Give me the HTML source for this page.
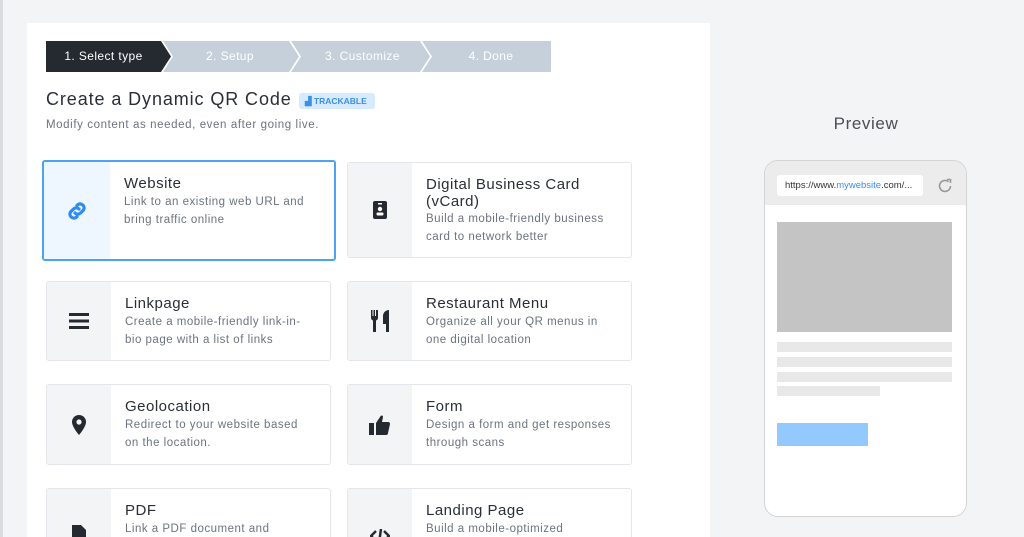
<!DOCTYPE html>
<html style="height:537px;overflow:hidden"><head><style>
*{margin:0;padding:0;box-sizing:border-box}
body{width:1024px;height:537px;overflow:hidden;background:#f3f4f6;font-family:"Liberation Sans",sans-serif;position:relative}
.abs{position:absolute}
.panel{left:27px;top:23px;width:683px;height:514px;background:#fff}
.step{top:41px;height:31px;color:#fff;font-size:12px;letter-spacing:0.4px;line-height:31px;text-align:center}
.card{position:absolute;width:285px;border:1px solid #e3e6ea;border-radius:3px;background:#fff;overflow:hidden}
.card .ic{position:absolute;left:0;top:0;bottom:0;width:64px;background:#f3f4f6;display:flex;align-items:center;justify-content:center}
.card .t{position:absolute;left:78px;top:13px;font-size:15px;letter-spacing:0.5px;color:#2a2f36;line-height:17px}
.card .d{position:absolute;left:78px;top:32px;font-size:11.5px;letter-spacing:0.5px;color:#6b7480;line-height:17.5px;width:190px}
</style></head><body>
<div class="abs" style="left:0;top:0;width:3px;height:537px;background:#d9dbde"></div>
<div class="abs panel"></div>
<svg class="abs" style="left:46px;top:41px" width="505" height="31">
<polygon points="0,0 115,0 125,15.5 115,31 0,31" fill="#252a31"/>
<polygon points="117,0 243,0 253,15.5 243,31 117,31 127,15.5" fill="#c5d0da"/>
<polygon points="245,0 374,0 384,15.5 374,31 245,31 255,15.5" fill="#c5d0da"/>
<polygon points="376,0 505,0 505,31 376,31 386,15.5" fill="#c5d0da"/>
</svg>
<div class="abs step" style="left:46px;width:115px">1. Select type</div>
<div class="abs step" style="left:170px;width:120px">2. Setup</div>
<div class="abs step" style="left:300px;width:125px">3. Customize</div>
<div class="abs step" style="left:432px;width:118px">4. Done</div>
<div class="abs" style="left:46px;top:89px;font-size:18px;letter-spacing:0.9px;color:#2a2f36">Create a Dynamic QR Code</div>
<div class="abs" style="left:299px;top:93px;width:76px;height:16px;background:#d6ebff;border-radius:3px;color:#3b8fe6;font-size:8.5px;font-weight:bold;line-height:16px;padding-left:6px">▟ TRACKABLE</div>
<div class="abs" style="left:46px;top:119px;font-size:11.5px;letter-spacing:0.6px;color:#6b7480">Modify content as needed, even after going live.</div>

<div class="card" style="left:42px;top:160px;width:294px;height:101px;border:2px solid #4da3f0"><div class="ic" style="width:66px;background:#eef6ff"><svg width="24" height="24" viewBox="0 0 24 24" fill="none" stroke="#2d8cf0" stroke-width="3.2" stroke-linecap="round"><path d="M10 14a4 4 0 0 0 5.5 0l3-3a4 4 0 0 0-5.5-5.5l-1 1"/><path d="M14 10a4 4 0 0 0-5.5 0l-3 3a4 4 0 0 0 5.5 5.5l1-1"/></svg></div><div class="t" style="left:80px;top:13px">Website</div><div class="d" style="left:80px;top:32px">Link to an existing web URL and bring traffic online</div></div>

<div class="card" style="left:347px;top:162px;height:96px"><div class="ic"><svg width="14" height="18" viewBox="0 0 14 18"><rect x="0" y="0" width="14" height="18" rx="2" fill="#252a31"/><rect x="5" y="2" width="4" height="1.5" fill="#fff"/><circle cx="7" cy="8" r="2.2" fill="#fff"/><rect x="3.5" y="11.5" width="7" height="3" rx="1.2" fill="#fff"/></svg></div><div class="t">Digital Business Card<br>(vCard)</div><div class="d" style="top:48px">Build a mobile-friendly business card to network better</div></div>

<div class="card" style="left:46px;top:281px;height:80px"><div class="ic"><svg width="20" height="18"><rect y="1" width="20" height="3" fill="#252a31"/><rect y="7.5" width="20" height="3" fill="#252a31"/><rect y="14" width="20" height="3" fill="#252a31"/></svg></div><div class="t">Linkpage</div><div class="d">Create a mobile-friendly link-in-bio page with a list of links</div></div>

<div class="card" style="left:347px;top:281px;height:80px"><div class="ic"><svg width="20" height="22" viewBox="0 0 20 22" fill="#252a31"><path d="M1 0h1.5v6h1V0h1.5v6h1V0H8v8a3 3 0 0 1-2 2.5V22H3V10.5A3 3 0 0 1 1 8z"/><path d="M19 0v22h-3v-8h-3V6a6 6 0 0 1 6-6z"/></svg></div><div class="t">Restaurant Menu</div><div class="d">Organize all your QR menus in one digital location</div></div>

<div class="card" style="left:46px;top:384px;height:81px"><div class="ic"><svg width="14" height="20" viewBox="0 0 14 20"><path d="M7 0a7 7 0 0 0-7 7c0 5 7 13 7 13s7-8 7-13a7 7 0 0 0-7-7z" fill="#252a31"/><circle cx="7" cy="7" r="2.6" fill="#f3f4f6"/></svg></div><div class="t">Geolocation</div><div class="d">Redirect to your website based on the location.</div></div>

<div class="card" style="left:347px;top:384px;height:81px"><div class="ic"><svg width="22" height="22" viewBox="0 0 22 22" fill="#252a31"><rect x="0" y="9" width="5" height="12"/><path d="M7 9l4-6c1-2 3-2 3 0l-1 5h6a2 2 0 0 1 2 2l-2 9a2 2 0 0 1-2 2H7z"/></svg></div><div class="t">Form</div><div class="d" style="width:200px">Design a form and get responses through scans</div></div>

<div class="card" style="left:46px;top:488px;height:70px"><div class="ic" style="align-items:flex-start;padding-top:36px"><svg width="14" height="18" viewBox="0 0 14 18"><path d="M0 0h9l5 5v13H0z" fill="#252a31"/></svg></div><div class="t">PDF</div><div class="d">Link a PDF document and</div></div>

<div class="card" style="left:347px;top:488px;height:70px"><div class="ic" style="align-items:flex-start;padding-top:40px"><svg width="20" height="14" viewBox="0 0 20 14" fill="none" stroke="#252a31" stroke-width="2.5"><path d="M6 2L1 7l5 5M14 2l5 5-5 5M11 0L9 14"/></svg></div><div class="t">Landing Page</div><div class="d">Build a mobile-optimized</div></div>

<div class="abs" style="left:766px;top:114px;width:200px;text-align:center;font-size:17px;letter-spacing:0.6px;color:#4a4f55">Preview</div>
<div class="abs" style="left:764px;top:160px;width:203px;height:357px;border:1px solid #d4d4d4;border-radius:14px;background:#fff;overflow:hidden">
<div style="height:44px;background:#ececec;position:relative">
<div class="abs" style="left:12px;top:14px;width:146px;height:21px;background:#fff;border-radius:3px;font-size:9.5px;line-height:21px;padding-left:8px;color:#333">https://www.<span style="color:#3b8fe6">mywebsite</span>.com/...</div>
<svg class="abs" style="left:172px;top:17px" width="16" height="16" viewBox="0 0 16 16" fill="none" stroke="#999" stroke-width="1.6"><path d="M13.5 8A5.5 5.5 0 1 1 11.5 3.7"/><path d="M10 1.5h3.5V5" /></svg>
</div>
<div class="abs" style="left:12px;top:61px;width:175px;height:110px;background:#c4c4c4"></div>
<div class="abs" style="left:12px;top:181px;width:175px;height:10px;background:#e8e8e8"></div>
<div class="abs" style="left:12px;top:196px;width:175px;height:10px;background:#e8e8e8"></div>
<div class="abs" style="left:12px;top:211px;width:175px;height:10px;background:#e8e8e8"></div>
<div class="abs" style="left:12px;top:225px;width:103px;height:10px;background:#e8e8e8"></div>
<div class="abs" style="left:12px;top:262px;width:91px;height:23px;background:#94c9ff"></div>
</div>
</body></html>
